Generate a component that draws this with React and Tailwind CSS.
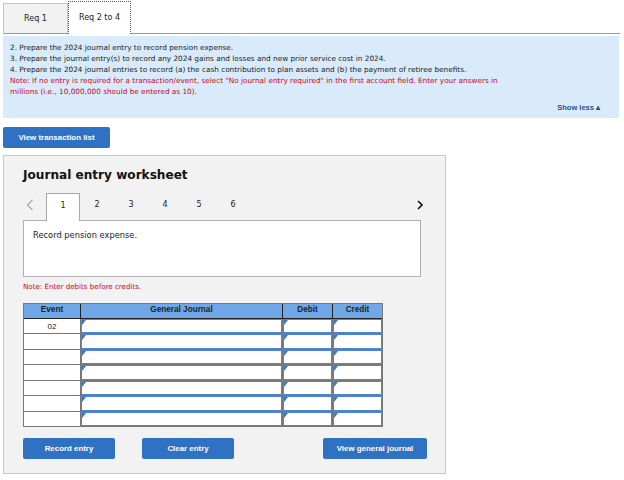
import React from "react";

const V = { fontFamily: '"DejaVu Sans", Verdana, sans-serif' };
const A = { fontFamily: '"Liberation Sans", Arial, sans-serif' };

function InputCell() {
  return (
    <div className="relative h-full bg-white border border-[#4f86d0]">
      <div className="absolute left-0 top-0 w-0 h-0 border-t-[5px] border-t-[#3a78d0] border-r-[4px] border-r-transparent" />
    </div>
  );
}

function Btn({ children, w }) {
  return (
    <div
      className={`h-[21px] ${w} bg-[#2f72c4] rounded-[2px] flex items-center justify-center text-white font-bold text-[7.9px]`}
      style={A}
    >
      {children}
    </div>
  );
}

export default function App() {
  const rows = ["02", "", "", "", "", "", ""];
  return (
    <div className="w-[624px] h-[480px] bg-white overflow-hidden" style={V}>
      {/* tabs */}
      <div className="pt-[1px] pl-[3px] pr-[4px]">
        <div className="flex items-end border-b border-[#9a9a9a]">
          <div className="w-[65px] h-[31px] -mb-px bg-[#f2f2f2] border border-[#c4c4c4] border-b-[#9a9a9a] flex items-center justify-center text-[8px] text-[#222]">
            Req 1
          </div>
          <div className="w-[63px] h-[33px] -mb-px bg-white border border-dotted border-[#2b5fb0] border-b-0 flex items-center justify-center text-[8px] text-[#222]">
            Req 2 to 4
          </div>
        </div>
      </div>

      {/* info panel */}
      <div className="mt-[2px] mx-[3px] w-[616px] h-[82px] bg-[#d9ebfa] pl-[7px] pt-[6px] pr-[19px] text-[7.3px] leading-[11px] text-[#222]">
        <div>2. Prepare the 2024 journal entry to record pension expense.</div>
        <div>3. Prepare the journal entry(s) to record any 2024 gains and losses and new prior service cost in 2024.</div>
        <div>4. Prepare the 2024 journal entries to record (a) the cash contribution to plan assets and (b) the payment of retiree benefits.</div>
        <div className="text-[#d0021b] w-[500px]">
          Note: If no entry is required for a transaction/event, select "No journal entry required" in the first account field. Enter your answers in millions (i.e., 10,000,000 should be entered as 10).
        </div>
        <div className="flex justify-end mt-[5px]">
          <span className="font-bold text-[#1d4f91] text-[7.5px]" style={A}>Show less ▴</span>
        </div>
      </div>

      {/* view transaction list */}
      <div className="mt-[9px] ml-[3px]">
        <Btn w="w-[107px]">View transaction list</Btn>
      </div>

      {/* worksheet */}
      <div className="mt-[7px] ml-[3px] w-[443px] h-[319px] bg-[#f2f2f2] border border-[#c8c8c8] pl-[19px]">
        <div className="mt-[12px] h-[15px] font-bold text-[12.1px] text-[#111] leading-[15px]">
          Journal entry worksheet
        </div>
        <div className="mt-[10px] flex items-end h-[27px] w-[398px] text-[8px] text-[#222]">
          <div className="w-[23px] pl-[3px] h-full flex items-center pb-[3px]">
            <svg width="8" height="12" viewBox="0 0 8 12">
              <path d="M6.5 1 L1.5 6 L6.5 11" fill="none" stroke="#a8a8a8" strokeWidth="1.2" />
            </svg>
          </div>
          <div className="w-[34px] h-[28px] -mb-px bg-white border border-[#a8a8a8] border-b-0 flex items-center justify-center relative z-10 pb-[3px]">
            1
          </div>
          {[2, 3, 4, 5, 6].map((n) => (
            <div key={n} className="w-[34px] h-full flex items-center justify-center pb-[3px]">
              {n}
            </div>
          ))}
          <div className="flex-1 h-full flex items-center justify-end -mr-[3px] pb-[3px]">
            <svg width="8" height="10" viewBox="0 0 8 10">
              <path d="M2 1 L6 5 L2 9" fill="none" stroke="#111" strokeWidth="1.6" />
            </svg>
          </div>
        </div>
        <div className="w-[398px] h-[57px] bg-white border border-[#b0b0b0] pl-[9px] pt-[8px] text-[8.3px] text-[#222]">
          Record pension expense.
        </div>
        <div className="mt-[5px] text-[7.1px] text-[#d0021b]">Note: Enter debits before credits.</div>

        {/* table */}
        <div className="mt-[10px] w-[360px] border border-[#777] bg-[#777]">
          <div className="grid grid-cols-[56px_201px_49px_49px] gap-x-px h-[15px] bg-[#222] border-b border-[#222]" style={A}>
            {["Event", "General Journal", "Debit", "Credit"].map((h) => (
              <div key={h} className="bg-[#6fa7e7] flex items-center justify-center text-[8.2px] font-bold text-[#222]">
                {h}
              </div>
            ))}
          </div>
          <div className="flex flex-col gap-y-px">
            {rows.map((r, i) => (
              <div key={i} className="grid grid-cols-[56px_201px_49px_49px] gap-x-px h-[14.5px]">
                <div className="bg-white flex items-start justify-center pt-[2px] text-[8px] text-[#222]" style={A}>
                  {r}
                </div>
                <InputCell />
                <InputCell />
                <InputCell />
              </div>
            ))}
          </div>
        </div>

        {/* buttons */}
        <div className="mt-[11px] flex w-[404px]">
          <Btn w="w-[92px]">Record entry</Btn>
          <div className="ml-[27px]">
            <Btn w="w-[92px]">Clear entry</Btn>
          </div>
          <div className="ml-auto">
            <Btn w="w-[104px]">View general journal</Btn>
          </div>
        </div>
      </div>
    </div>
  );
}
